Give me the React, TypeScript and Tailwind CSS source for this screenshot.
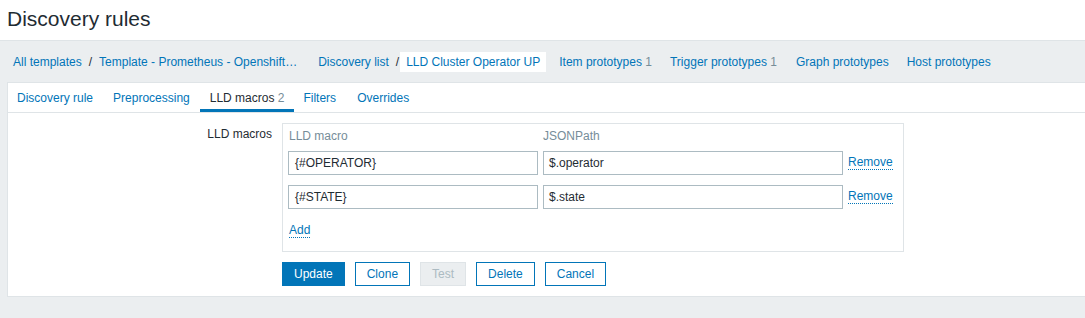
import React from "react";

const LINK = "text-[#0275b8]";

function NavItem({ children, count }: { children: React.ReactNode; count?: string }) {
  return (
    <span className={`px-[6px] whitespace-nowrap ${LINK}`}>
      {children}
      {count && <span className="text-[#768d99]"> {count}</span>}
    </span>
  );
}

function Sep() {
  return <span className="text-[#1f2c33] px-[1px]">/</span>;
}

function MacroRow({ macro, path }: { macro: string; path: string }) {
  return (
    <div className="flex items-center gap-[5px]">
      <div className="w-[250px] h-[24px] border border-[#acbbc2] bg-white flex items-center px-[6px]">{macro}</div>
      <div className="w-[300px] h-[24px] border border-[#acbbc2] bg-white flex items-center px-[5px]">{path}</div>
      <span className={`${LINK} leading-[14px] border-b border-dotted border-[#0275b8] mb-[2px]`}>Remove</span>
    </div>
  );
}

export default function App() {
  return (
    <div className="w-[1085px] h-[318px] overflow-hidden bg-[#ebeef0] font-['Liberation_Sans',Arial,sans-serif] text-[12px] leading-[14px] text-[#1f2c33]">
      <header className="h-[41px] bg-white border-b border-[#dfe4e7] flex items-center px-[7px]">
        <h1 className="text-[21px] leading-[24px] mt-[-2px]">Discovery rules</h1>
      </header>
      <nav className="h-[41px] flex items-center px-[7px]">
        <NavItem>All templates</NavItem>
        <Sep />
        <NavItem>Template - Prometheus - Openshift…</NavItem>
        <span className="w-[9px]" />
        <NavItem>Discovery list</NavItem>
        <Sep />
        <span className={`px-[6px] h-[20px] flex items-center bg-white whitespace-nowrap ${LINK}`}>LLD Cluster Operator UP</span>
        <span className="w-[7px]" />
        <NavItem count="1">Item prototypes</NavItem>
        <span className="w-[6px]" />
        <NavItem count="1">Trigger prototypes</NavItem>
        <span className="w-[7px]" />
        <NavItem>Graph prototypes</NavItem>
        <span className="w-[6px]" />
        <NavItem>Host prototypes</NavItem>
      </nav>
      <section className="ml-[7px] bg-white border border-r-0 border-[#dfe4e7] h-[215px]">
        <div className="flex h-[30px] border-b border-[#dfe4e7]">
          <span className={`pl-[9px] pr-[10px] flex items-center ${LINK}`}>Discovery rule</span>
          <span className={`px-[10px] flex items-center ${LINK}`}>Preprocessing</span>
          <span className="px-[10px] flex items-center border-b-[3px] border-[#0275b8] pt-[3px]">
            LLD macros<span className="text-[#768d99]">&nbsp;2</span>
          </span>
          <span className={`pl-[9px] pr-[11px] flex items-center ${LINK}`}>Filters</span>
          <span className={`px-[10px] flex items-center ${LINK}`}>Overrides</span>
        </div>
        <div className="pt-[10px] flex gap-[10px]">
          <div className="w-[264px] text-right pt-[4px]">LLD macros</div>
          <div>
            <div className="w-[622px] h-[129px] border border-[#dfe4e7] px-[5px] pt-[5px]">
              <div className="flex text-[#768d99] h-[14px]">
                <span className="w-[255px] pl-[1px]">LLD macro</span>
                <span>JSONPath</span>
              </div>
              <div className="mt-[8px] flex flex-col gap-[10px]">
                <MacroRow macro="{#OPERATOR}" path="$.operator" />
                <MacroRow macro="{#STATE}" path="$.state" />
              </div>
              <div className="mt-[14px] pl-[1px]">
                <span className={`${LINK} border-b border-dotted border-[#0275b8]`}>Add</span>
              </div>
            </div>
            <div className="mt-[10px] flex gap-[10px]">
              <button className="h-[24px] px-[11px] bg-[#0275b8] text-white border border-[#0275b8]">Update</button>
              <button className="h-[24px] px-[11px] bg-white text-[#0275b8] border border-[#0275b8]">Clone</button>
              <button className="h-[24px] px-[11px] bg-[#ebeef0] text-[#acbbc2] border border-[#dfe4e7]">Test</button>
              <button className="h-[24px] px-[11px] bg-white text-[#0275b8] border border-[#0275b8]">Delete</button>
              <button className="h-[24px] px-[11px] bg-white text-[#0275b8] border border-[#0275b8]">Cancel</button>
            </div>
          </div>
        </div>
      </section>
    </div>
  );
}
